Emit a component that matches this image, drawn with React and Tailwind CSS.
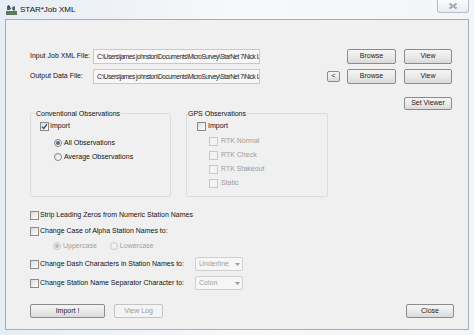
import React from "react";

const font = { fontFamily: '"Liberation Sans", Arial, sans-serif' };

function Btn({ children, w, disabled, className = "" }) {
  return (
    <div
      className={`flex items-center justify-center h-full rounded-[2px] border ${disabled ? "border-[#c4c4c4] bg-[#f4f4f4] text-[#9a9a9a]" : "border-[#8c8c8c] bg-gradient-to-b from-[#f4f4f4] via-[#ebebeb] to-[#d9d9d9] text-[#1b1b1b]"} text-[7px] ${w} ${className}`}
    >
      {children}
    </div>
  );
}

function Check({ checked, disabled }) {
  return (
    <div
      className={`w-[9px] h-[9px] border flex items-center justify-center ${disabled ? "border-[#c8c8c8] bg-[#f3f3f3]" : "border-[#8a8a8a] bg-gradient-to-br from-[#dcdcdc] to-[#ffffff]"}`}
    >
      {checked && (
        <svg width="7" height="7" viewBox="0 0 7 7">
          <path d="M1 3.6 L2.8 5.4 L6 1.2" stroke="#2c4a74" strokeWidth="1.3" fill="none" />
        </svg>
      )}
    </div>
  );
}

function Radio({ on, disabled }) {
  return (
    <div
      className={`w-[8px] h-[8px] rounded-full border flex items-center justify-center ${disabled ? "border-[#c6c6c6] bg-[#f2f2f2]" : "border-[#8a8a8a] bg-gradient-to-br from-[#dedede] to-[#ffffff]"}`}
    >
      {on && <div className={`w-[4px] h-[4px] rounded-full ${disabled ? "bg-[#b8b8b8]" : "bg-[#4b6f98]"}`} />}
    </div>
  );
}

function Field({ text }) {
  return (
    <div className="w-[167px] h-full border border-[#c9c9c9] bg-[#f7f7f7] flex items-center pl-[3px] overflow-hidden whitespace-nowrap text-[6.5px] tracking-[-0.48px] text-[#222]">
      {text}
    </div>
  );
}

function Combo({ value }) {
  return (
    <div className="w-[48px] h-full border border-[#cfcfcf] rounded-[2px] bg-[#f6f6f6] flex items-center justify-between pl-[3px] pr-[2px] text-[7px] text-[#a0a0a0]">
      <span>{value}</span>
      <svg width="5" height="3" viewBox="0 0 5 3">
        <path d="M0 0 H5 L2.5 3 Z" fill="#9a9a9a" />
      </svg>
    </div>
  );
}

export default function App() {
  const path = "C:\\Users\\james johnston\\Documents\\MicroSurvey\\StarNet 7\\Nick Lab";
  return (
    <div className="w-[474px] h-[335px] bg-gradient-to-r from-[#e6edf4] via-[#f7f8fa] to-[#f3f5f8] overflow-hidden" style={font}>
      <div className="h-[19px] flex items-start">
        <div className="flex items-center h-[19px] pl-[6px] gap-[3px]">
          <svg width="11" height="10" viewBox="0 0 11 10">
            <rect x="0" y="6" width="11" height="4" fill="#5d7a58" />
            <rect x="1" y="1" width="3" height="4" fill="#41617f" />
            <rect x="6" y="2" width="3" height="3" fill="#7a8f6a" />
            <path d="M2 0 L5 4 M8 1 L8 6" stroke="#2f3f4f" strokeWidth="1" />
          </svg>
          <span className="text-[8px] text-[#111]">STAR*Job XML</span>
        </div>
        <div className="ml-auto mr-[5px] w-[32px] h-[13px] border border-t-0 border-[#b5bec8] rounded-b-[3px] bg-gradient-to-b from-[#fafbfc] to-[#e9edf1] flex items-center justify-center">
          <svg width="8" height="6" viewBox="0 0 8 6">
            <path d="M0.5 0.5 L7.5 5.5 M7.5 0.5 L0.5 5.5" stroke="#7c848c" strokeWidth="1.6" />
            <path d="M0.5 0.5 L7.5 5.5 M7.5 0.5 L0.5 5.5" stroke="#f0f0f0" strokeWidth="0.5" />
          </svg>
        </div>
      </div>

      <div className="ml-[5px] w-[464px] h-[311px] border border-[#a9adb2] bg-[#f0f0f0] pl-[24px] pt-[29px] text-[7px] text-[#111]">
        <div className="flex items-center h-[15px]">
          <div className="w-[63px]">Input Job XML File:</div>
          <Field text={path} />
          <div className="w-[87px]" />
          <Btn w="w-[49px]">Browse</Btn>
          <Btn w="w-[48px]" className="ml-[8px]">View</Btn>
        </div>
        <div className="flex items-center h-[15px] mt-[5px]">
          <div className="w-[63px]">Output Data File:</div>
          <Field text={path} />
          <div className="w-[87px] h-full flex justify-end items-center pr-[7px]">
            <div className="h-[11px]">
              <Btn w="w-[13px]">&lt;</Btn>
            </div>
          </div>
          <Btn w="w-[49px]">Browse</Btn>
          <Btn w="w-[48px]" className="ml-[8px]">View</Btn>
        </div>
        <div className="h-[13px] mt-[13px] ml-[374px]">
          <Btn w="w-[48px]">Set Viewer</Btn>
        </div>

        <div className="flex mt-[3px] gap-[15px]">
          <div className="relative w-[141px] h-[84px] border border-[#d8dde2] rounded-[2px] pl-[9px] pt-[8px]">
            <span className="absolute -top-[5px] left-[4px] bg-[#f0f0f0] px-[1px] leading-[9px]">Conventional Observations</span>
            <div className="flex items-center gap-[1px] h-[9px]">
              <Check checked />
              <span>Import</span>
            </div>
            <div className="pl-[14px] mt-[8px] flex flex-col gap-[6px]">
              <div className="flex items-center gap-[2px] h-[8px]">
                <Radio on />
                <span>All Observations</span>
              </div>
              <div className="flex items-center gap-[2px] h-[8px]">
                <Radio />
                <span>Average Observations</span>
              </div>
            </div>
          </div>
          <div className="relative w-[142px] h-[84px] border border-[#d8dde2] rounded-[2px] pl-[10px] pt-[8px]">
            <span className="absolute -top-[5px] left-[0px] bg-[#f0f0f0] px-[1px] leading-[9px]">GPS Observations</span>
            <div className="flex items-center gap-[2px] h-[9px]">
              <Check />
              <span>Import</span>
            </div>
            <div className="pl-[12px] mt-[6px] flex flex-col gap-[5px] text-[#9c9c9c]">
              {["RTK Normal", "RTK Check", "RTK Stakeout", "Static"].map((t) => (
                <div key={t} className="flex items-center gap-[3px] h-[9px]">
                  <Check disabled />
                  <span>{t}</span>
                </div>
              ))}
            </div>
          </div>
        </div>

        <div className="flex items-center gap-[1px] h-[10px] mt-[13px]">
          <Check />
          <span>Strip Leading Zeros from Numeric Station Names</span>
        </div>
        <div className="flex items-center gap-[1px] h-[10px] mt-[6px]">
          <Check />
          <span>Change Case of Alpha Station Names to:</span>
        </div>
        <div className="flex items-center h-[10px] mt-[5px] pl-[23px] text-[#a0a0a0]">
          <Radio on disabled />
          <span className="ml-[2px]">Uppercase</span>
          <div className="ml-[13px]">
            <Radio disabled />
          </div>
          <span className="ml-[2px]">Lowercase</span>
        </div>
        <div className="flex items-center h-[14px] mt-[6px]">
          <div className="w-[165px] flex items-center gap-[1px]">
            <Check />
            <span>Change Dash Characters in Station Names to:</span>
          </div>
          <Combo value="Underline" />
        </div>
        <div className="flex items-center h-[14px] mt-[5px]">
          <div className="w-[165px] flex items-center gap-[1px]">
            <Check />
            <span>Change Station Name Separator Character to:</span>
          </div>
          <Combo value="Colon" />
        </div>

        <div className="flex h-[14px] mt-[14px]">
          <Btn w="w-[75px]">Import !</Btn>
          <Btn w="w-[49px]" className="ml-[9px]" disabled>View Log</Btn>
          <Btn w="w-[48px]" className="ml-auto mr-[14px]">Close</Btn>
        </div>
      </div>
    </div>
  );
}
